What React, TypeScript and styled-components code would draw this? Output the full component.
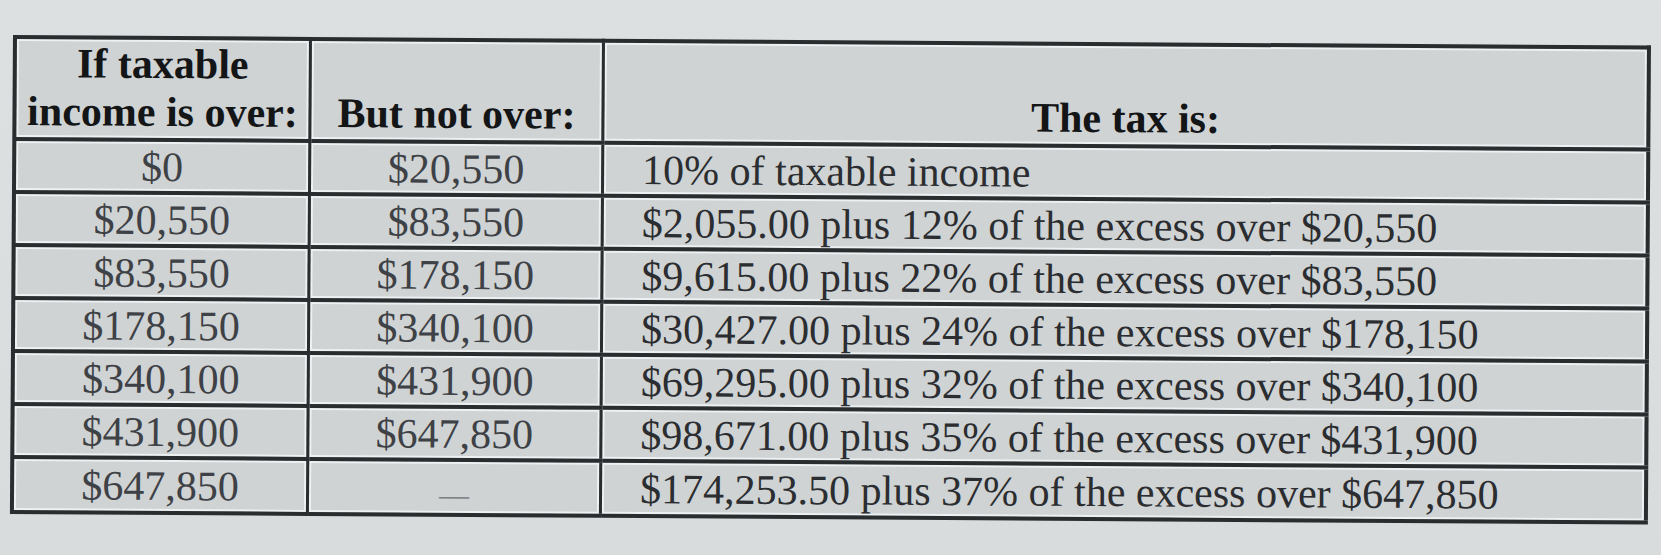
import React from 'react';
import styled, { createGlobalStyle } from 'styled-components';

const GlobalStyle = createGlobalStyle`
	html, body {
		margin: 0;
		padding: 0;
		background: #dcdfe0;
	}
	body {
		font-family: 'Liberation Serif', 'Times New Roman', serif;
	}
`;

const Page = styled.div`
	width: 1661px;
	height: 555px;
	padding: 35px 0 0 13px;
	box-sizing: border-box;
	background: linear-gradient(180deg, #dde0e1 0%, #d9dcdd 100%);
	overflow: hidden;
`;

const Table = styled.table`
	border-collapse: collapse;
	border: 4px solid #2a2d2f;
	table-layout: fixed;
	width: 1624px;
	transform: rotate(0.37deg);
	transform-origin: left top;
	background: #cfd3d4;
`;

const HeadCell = styled.th<{ $width: number }>`
	width: ${p => p.$width}px;
	height: 96px;
	padding: 0 0 2px;
	border: 3px solid #2a2d2f;
	box-shadow: inset 0 0 0 2px #eef1f2;
	vertical-align: bottom;
	text-align: center;
	font-size: 42px;
	font-weight: 700;
	line-height: 48px;
	color: #141516;
`;

const Cell = styled.td<{ $align?: 'left' | 'center'; $tone?: 'soft' | 'dark' }>`
	height: 48px;
	padding: ${p => (p.$align === 'left' ? '1px 0 0 38px' : '1px 0 0')};
	border: 3px solid #2a2d2f;
	border-width: 4px 3px;
	box-shadow: inset 0 0 0 2px #eef1f2;
	text-align: ${p => p.$align || 'center'};
	vertical-align: middle;
	font-size: 42px;
	line-height: 46px;
	white-space: nowrap;
	color: ${p => (p.$tone === 'dark' ? '#2b2d30' : '#3e4145')};
`;

const Dash = styled.span`
	display: inline-block;
	font-size: 30px;
	color: #7d8184;
	transform: translateY(5px);
`;

type Bracket = {
	over: string;
	notOver: string | null;
	tax: string;
};

const brackets: Bracket[] = [
	{ over: '$0', notOver: '$20,550', tax: '10% of taxable income' },
	{ over: '$20,550', notOver: '$83,550', tax: '$2,055.00 plus 12% of the excess over $20,550' },
	{ over: '$83,550', notOver: '$178,150', tax: '$9,615.00 plus 22% of the excess over $83,550' },
	{ over: '$178,150', notOver: '$340,100', tax: '$30,427.00 plus 24% of the excess over $178,150' },
	{ over: '$340,100', notOver: '$431,900', tax: '$69,295.00 plus 32% of the excess over $340,100' },
	{ over: '$431,900', notOver: '$647,850', tax: '$98,671.00 plus 35% of the excess over $431,900' },
	{ over: '$647,850', notOver: null, tax: '$174,253.50 plus 37% of the excess over $647,850' }
];

const App: React.FC = () => (
	<>
		<GlobalStyle />
		<Page>
			<Table>
				<thead>
					<tr>
						<HeadCell $width={292}>
							If taxable
							<br />
							income is over:
						</HeadCell>
						<HeadCell $width={290}>But not over:</HeadCell>
						<HeadCell $width={1042}>The tax is:</HeadCell>
					</tr>
				</thead>
				<tbody>
					{brackets.map(b => (
						<tr key={b.over}>
							<Cell>{b.over}</Cell>
							<Cell>{b.notOver ?? <Dash>—</Dash>}</Cell>
							<Cell $align='left' $tone='dark'>
								{b.tax}
							</Cell>
						</tr>
					))}
				</tbody>
			</Table>
		</Page>
	</>
);

export default App;
